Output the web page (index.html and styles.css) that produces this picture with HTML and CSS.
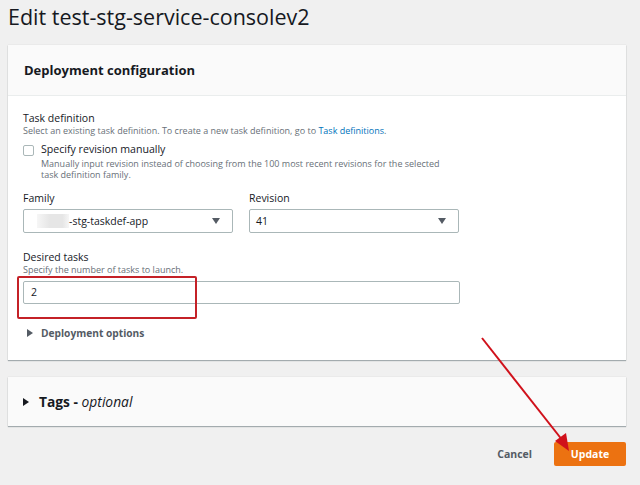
FILE: index.html
```html
<!DOCTYPE html>
<html>
<head>
<meta charset="utf-8">
<link rel="stylesheet" href="styles.css">
</head>
<body>
<div class="page">
  <h1 class="title">Edit test-stg-service-consolev2</h1>
  <section class="card">
    <div class="card-header">Deployment configuration</div>
    <div class="card-body">
      <div class="label">Task definition</div>
      <div class="desc">Select an existing task definition. To create a new task definition, go to <span class="link">Task definitions</span>.</div>
      <div class="check-row">
        <span class="checkbox"></span>
        <div class="check-text">
          <div class="check-label">Specify revision manually</div>
          <div class="check-desc">Manually input revision instead of choosing from the 100 most recent revisions for the selected task definition family.</div>
        </div>
      </div>
      <div class="selects">
        <div class="field">
          <div class="label">Family</div>
          <div class="select"><span class="blur"></span><span class="select-value">-stg-taskdef-app</span><span class="caret"></span></div>
        </div>
        <div class="field">
          <div class="label">Revision</div>
          <div class="select"><span class="select-value pad">41</span><span class="caret"></span></div>
        </div>
      </div>
      <div class="desired">
        <div class="label">Desired tasks</div>
        <div class="desc">Specify the number of tasks to launch.</div>
        <div class="input-wrap">
          <div class="input">2</div>
          <div class="highlight"></div>
        </div>
      </div>
      <div class="expander"><span class="tri"></span>Deployment options</div>
    </div>
  </section>
  <section class="card tags">
    <span class="tri small"></span><span class="tags-title">Tags - <em>optional</em></span>
  </section>
  <div class="actions">
    <span class="cancel">Cancel</span>
    <span class="update">Update</span>
  </div>
</div>
<svg class="arrow" width="640" height="485" viewBox="0 0 640 485">
  <line x1="482" y1="338" x2="563" y2="441" stroke="#d0111b" stroke-width="2"/>
  <polygon points="569,451 555,441 566,433" fill="#d0111b"/>
</svg>
</body>
</html>
```
FILE: styles.css
```css
* { box-sizing: border-box; }
html, body { margin: 0; padding: 0; }
body {
  background: #f0f0f0;
  font-family: "Open Sans", "Noto Sans", sans-serif;
  color: #16191f;
  width: 640px;
  height: 485px;
  overflow: hidden;
  position: relative;
}
.page { padding: 0 14px 0 8px; }
.title {
  margin: 0;
  height: 45px;
  font-size: 21.5px;
  font-weight: 400;
  line-height: 34px;
}
.card {
  background: #fff;
  box-shadow: 0 1px 1px rgba(0, 28, 36, 0.3), 0 0 1px rgba(0, 28, 36, 0.15);
}
.card-header {
  height: 51px;
  background: #fafafa;
  border-bottom: 1px solid #eaeded;
  padding-left: 16px;
  font-size: 13px;
  font-weight: 700;
  line-height: 51px;
}
.card-body {
  padding: 16px 166px 20px 15px;
}
.label {
  font-size: 10.5px;
  line-height: 13px;
  color: #16191f;
}
.desc {
  font-size: 9px;
  line-height: 12px;
  color: #687078;
}
.link { color: #0073bb; }
.check-row {
  display: flex;
  margin-top: 6px;
}
.checkbox {
  width: 11px;
  height: 11px;
  border: 1px solid #aab7b8;
  border-radius: 2px;
  margin-top: 2px;
  margin-right: 7px;
  flex: none;
  background: #fff;
}
.check-label {
  font-size: 10.6px;
  line-height: 13px;
}
.check-desc {
  max-width: 408px;
  font-size: 9px;
  line-height: 11px;
  color: #687078;
  margin-top: 2px;
}
.selects {
  display: grid;
  grid-template-columns: 210px 210px;
  column-gap: 16px;
  margin-top: 12px;
}
.select {
  margin-top: 4px;
  height: 24px;
  border: 1px solid #aab7b8;
  border-radius: 2px;
  display: flex;
  align-items: center;
  padding-left: 13px;
  padding-right: 8px;
  font-size: 10.5px;
}
.blur {
  width: 32px;
  height: 14px;
  background: linear-gradient(90deg, #f6f6f6, #e6e6e6 40%, #e6e6e6 80%, #f6f6f6);
}
.select-value { flex: 1; }
.select-value.pad { margin-left: -7px; }
.caret {
  width: 0;
  height: 0;
  border-left: 4.5px solid transparent;
  border-right: 4.5px solid transparent;
  border-top: 6px solid #545b64;
  margin-right: 4px;
}
.desired { margin-top: 18px; }
.input-wrap {
  position: relative;
  margin-top: 5px;
}
.input {
  height: 23px;
  border: 1px solid #aab7b8;
  border-radius: 2px;
  padding-left: 7px;
  font-size: 10.5px;
  line-height: 21px;
}
.highlight {
  position: absolute;
  left: -6px;
  top: -5px;
  width: 180px;
  height: 43px;
  border: 2.5px solid #c42127;
  border-radius: 2px;
}
.expander {
  margin-top: 22px;
  margin-left: 4px;
  font-size: 10.2px;
  font-weight: 700;
  line-height: 14px;
  color: #545b64;
  display: flex;
  align-items: center;
}
.tri {
  width: 0;
  height: 0;
  border-top: 4px solid transparent;
  border-bottom: 4px solid transparent;
  border-left: 6px solid #545b64;
  margin-right: 8px;
}
.tags {
  margin-top: 17px;
  height: 49px;
  background: #fafafa;
  display: flex;
  align-items: center;
  padding-left: 15px;
}
.tri.small {
  border-top-width: 4px;
  border-bottom-width: 4px;
  border-left: 6px solid #16191f;
  margin-right: 10px;
}
.tags-title {
  font-size: 13.8px;
  font-weight: 700;
}
.tags-title em {
  font-weight: 400;
  font-style: italic;
}
.actions {
  margin-top: 16px;
  display: flex;
  justify-content: flex-end;
  align-items: center;
}
.cancel {
  font-size: 10.5px;
  font-weight: 700;
  color: #545b64;
  margin-right: 22px;
}
.update {
  width: 72px;
  height: 24px;
  background: #ec7211;
  border-radius: 2px;
  color: #fff;
  font-size: 10.5px;
  font-weight: 700;
  line-height: 24px;
  text-align: center;
}
.arrow {
  position: absolute;
  left: 0;
  top: 0;
  pointer-events: none;
}
```
